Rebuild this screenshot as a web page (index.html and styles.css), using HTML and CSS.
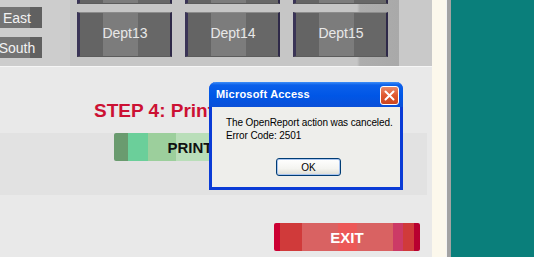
FILE: index.html
```html
<!DOCTYPE html>
<html lang="en">

<head>
    <meta charset="UTF-8">
    <title>Print Reports</title>
    <link rel="stylesheet" href="styles.css">
</head>

<body>
    <div class="main">
        <div class="top">
            <div class="side">
                <button class="side-btn">East</button>
                <button class="side-btn">South</button>
            </div>
            <div class="panel">
                <!-- upper row is scrolled out of view, only its bottom edge shows -->
                <button class="dept"></button>
                <button class="dept"></button>
                <button class="dept"></button>
                <button class="dept">Dept13</button>
                <button class="dept">Dept14</button>
                <button class="dept">Dept15</button>
            </div>
        </div>

        <h2 class="step">STEP 4: Print Reports</h2>

        <div class="band">
            <button class="print-btn">PRINT</button>
        </div>

        <button class="exit-btn">EXIT</button>
    </div>
    <div class="cream"></div>
    <div class="divider"></div>
    <div class="teal"></div>

    <div class="dialog">
        <div class="title-bar">
            <span class="title">Microsoft Access</span>
            <span class="close">
                <svg width="11" height="11" viewBox="0 0 11 11">
                    <path d="M1.5 1.5 L9.5 9.5 M9.5 1.5 L1.5 9.5" stroke="#fff" stroke-width="2" stroke-linecap="round" />
                </svg>
            </span>
        </div>
        <div class="dialog-body">
            <p class="msg">The OpenReport action was canceled.<br>Error Code: 2501</p>
            <button class="ok-btn">OK</button>
        </div>
    </div>
</body>

</html>
```

FILE: styles.css
```css
body {
    margin: 0;
    height: 257px;
    overflow: hidden;
    display: flex;
    font-family: "Liberation Sans", Arial, sans-serif;
    background-color: #008080;
}

.main {
    width: 432px;
    background-color: #e9e9e9;
    display: flex;
    flex-direction: column;
}

.top {
    display: flex;
    height: 66px;
    border-bottom: 1px solid #f6f6f6;
    background-color: #c9c9c9;
}

.side {
    width: 70px;
    padding-top: 7px;
    display: flex;
    flex-direction: column;
    gap: 9px;
    background-color: #cdcdcd;
}

.side-btn {
    width: 50px;
    height: 21px;
    margin-left: -8px;
    padding: 0;
    border: none;
    font-family: inherit;
    font-size: 14px;
    color: #f2f2f2;
    background: linear-gradient(to right, #747474 0, #747474 38px, #606060 38px);
}

.panel {
    width: 329px;
    margin-top: -37px;
    padding: 0 11px 9px 7px;
    box-sizing: border-box;
    display: grid;
    grid-template-columns: repeat(3, 95px);
    grid-template-rows: 41px 45px;
    column-gap: 13px;
    row-gap: 8px;
    background: linear-gradient(to right, #c6c6c6 0, #c6c6c6 287px, #adadad 290px, #a9a9a9 100%);
}

.dept {
    padding: 0 0 4px;
    font-family: inherit;
    font-size: 14px;
    color: #e8e8e8;
    border: none;
    border-left: 3px solid #3a3456;
    border-right: 2px solid #2e2948;
    border-top: 1px solid #8c8c8c;
    border-bottom: 1px solid #5c5c5c;
    background: linear-gradient(to right, #646464 0, #646464 23px, #7c7c7c 23px, #7c7c7c 58px, #676767 58px);
}

.step {
    margin: 33px 0 0 94px;
    height: 33px;
    font-size: 19px;
    line-height: 21px;
    font-weight: bold;
    color: #cc1133;
    white-space: nowrap;
}

.band {
    width: 427px;
    height: 62px;
    background-color: #e2e2e2;
}

.print-btn {
    margin-left: 114px;
    width: 152px;
    height: 28px;
    padding: 0;
    border: none;
    border-radius: 2px;
    font-family: inherit;
    font-size: 15px;
    font-weight: bold;
    color: #111;
    background: linear-gradient(to right, #6a9b6f 0, #6a9b6f 14px, #6bcf9a 14px, #6bcf9a 34px, #9ccf9c 34px, #9ccf9c 62px, #b9deb9 62px);
}

.exit-btn {
    margin: 28px 0 0 274px;
    width: 146px;
    height: 28px;
    padding: 0;
    border: none;
    border-radius: 2px;
    font-family: inherit;
    font-size: 15px;
    font-weight: bold;
    color: #fff;
    background: linear-gradient(to right,
            #cc0033 0, #cc0033 6px,
            #d03a3a 6px, #d03a3a 28px,
            #d96262 28px, #d96262 64px,
            #ec5858 64px, #ec5858 83px,
            #d96262 83px, #d96262 119px,
            #cc3a66 119px, #cc3a66 129px,
            #d03a3a 129px, #d03a3a 140px,
            #b80030 140px);
}

.cream {
    width: 14px;
    background-color: #fcf8ec;
}

.divider {
    width: 4px;
    border-left: 1px solid #f4f4f4;
    background-color: #a3a3a3;
}

.teal {
    flex: 1;
    background-color: #0a7f7b;
}

/* the message box lies over the form */
.dialog {
    position: absolute;
    left: 209px;
    top: 82px;
    width: 194px;
    height: 108px;
    box-sizing: border-box;
    border: 3px solid #0a3bd6;
    border-top: none;
    border-radius: 7px 7px 0 0;
    background-color: #eeeeeb;
    font-family: "Liberation Sans", Tahoma, sans-serif;
}

.title-bar {
    position: relative;
    height: 25px;
    margin: 0 -3px;
    border-radius: 7px 7px 0 0;
    background: linear-gradient(to bottom, #3d8ef8 0, #0b60ea 3px, #0056e6 55%, #0a4fd8 100%);
}

.title {
    position: absolute;
    left: 7px;
    top: 6px;
    font-size: 11px;
    font-weight: bold;
    letter-spacing: 0.2px;
    color: #fff;
}

.close {
    position: absolute;
    right: 4px;
    top: 4px;
    width: 17px;
    height: 17px;
    border: 1px solid #fff;
    border-radius: 3px;
    background: linear-gradient(to bottom, #e98a6a 0, #e0582e 50%, #cc4520 100%);
    display: flex;
    align-items: center;
    justify-content: center;
}

.dialog-body {
    padding: 9px 0 0 14px;
}

.msg {
    margin: 0;
    font-size: 10px;
    line-height: 13px;
    letter-spacing: -0.1px;
    color: #000;
}

.ok-btn {
    display: block;
    margin: 16px 0 0 50px;
    width: 65px;
    height: 18px;
    padding: 0;
    border: 1px solid #003c74;
    border-radius: 3px;
    box-shadow: inset 0 0 0 1px #a8c4f0;
    background: linear-gradient(to bottom, #ffffff 0, #f4f4f0 60%, #dcdcd4 100%);
    font-family: inherit;
    font-size: 10px;
    color: #000;
}
```
